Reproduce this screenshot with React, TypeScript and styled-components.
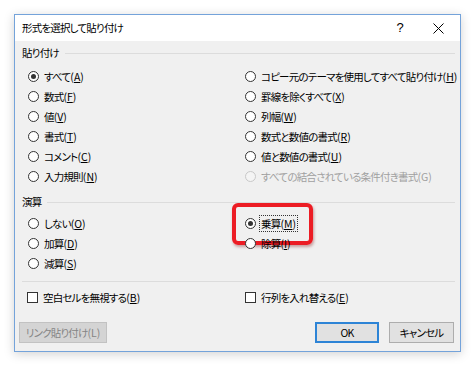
import React from "react";
import styled, { createGlobalStyle } from "styled-components";

const Global = createGlobalStyle`
  html, body { margin: 0; padding: 0; background: #ffffff; }
  body {
    font-family: "Noto Sans CJK JP", "Noto Sans", sans-serif;
    font-size: 10.5px;
    letter-spacing: -0.8px;
    color: #000;
    font-feature-settings: "palt";
  }
`;

const Page = styled.div`
  width: 474px;
  height: 366px;
  padding: 14px 0 0 14px;
  box-sizing: border-box;
`;

const Dialog = styled.div`
  width: 447px;
  height: 338px;
  box-sizing: border-box;
  border: 1px solid #74a3da;
  background: #f0f0f0;
  box-shadow: 0 2px 10px rgba(0, 0, 0, 0.18);
  display: flex;
  flex-direction: column;
`;

const TitleBar = styled.div`
  height: 26px;
  background: #ffffff;
  display: flex;
  align-items: center;
  padding-left: 7px;
  line-height: 26px;
`;

const TitleText = styled.div`
  flex: 1;
`;

const TitleButton = styled.div<{ $w: number }>`
  width: ${(p) => p.$w}px;
  height: 26px;
  display: flex;
  align-items: center;
  justify-content: center;
  font-family: "Liberation Sans", sans-serif;
  font-size: 13px;
  letter-spacing: 0;
`;

const Body = styled.div`
  flex: 1;
  padding: 4px 5px 0 7px;
  display: flex;
  flex-direction: column;
`;

const GroupHeader = styled.div<{ $mt: number }>`
  height: 16px;
  margin-top: ${(p) => p.$mt}px;
  display: flex;
  align-items: center;
  gap: 6px;
  line-height: 16px;
  &::after {
    content: "";
    flex: 1;
    height: 1px;
    background: #dcdcdc;
  }
`;

const OptionGrid = styled.div<{ $mt: number; $rows: number }>`
  margin-top: ${(p) => p.$mt}px;
  padding-left: 6px;
  display: grid;
  grid-template-columns: 217px 1fr;
  grid-auto-flow: column;
  grid-template-rows: repeat(${(p) => p.$rows}, 20px);
  position: relative;
`;

const Option = styled.div<{ $disabled?: boolean }>`
  height: 20px;
  display: flex;
  align-items: center;
  gap: 5px;
  white-space: nowrap;
  color: ${(p) => (p.$disabled ? "#a0a0a0" : "#000")};
  position: relative;
`;

const Radio = styled.span<{ $checked?: boolean; $disabled?: boolean }>`
  width: 11px;
  height: 11px;
  box-sizing: border-box;
  border-radius: 50%;
  border: 1px solid ${(p) => (p.$disabled ? "#c8c8c8" : "#333333")};
  background: ${(p) => (p.$disabled ? "#f4f4f4" : "#ffffff")};
  display: flex;
  align-items: center;
  justify-content: center;
  flex: none;
  &::after {
    content: "";
    display: ${(p) => (p.$checked ? "block" : "none")};
    width: 5px;
    height: 5px;
    border-radius: 50%;
    background: #333333;
  }
`;

const Check = styled.span`
  width: 11px;
  height: 11px;
  box-sizing: border-box;
  border: 1px solid #333333;
  background: #ffffff;
  flex: none;
`;

const Focus = styled.span`
  outline: 1px dotted #333;
  outline-offset: 0px;
  padding: 0 1px;
  margin-left: -1px;
`;

const AccessKey = styled.span`
  letter-spacing: 0;
`;

const Highlight = styled.div`
  position: absolute;
  left: -13px;
  top: -10px;
  width: 81px;
  height: 42px;
  box-sizing: border-box;
  border: 4px solid #ec1c24;
  border-radius: 6px;
  box-shadow: 1px 2px 3px rgba(120, 0, 0, 0.35);
  pointer-events: none;
`;

const Separator = styled.div`
  margin-top: 8px;
  height: 1px;
  background: #dcdcdc;
`;

const CheckRow = styled.div`
  margin-top: 5px;
  padding-left: 5px;
  display: grid;
  grid-template-columns: 218px 1fr;
`;

const ButtonRow = styled.div`
  margin-top: 15px;
  padding: 0 1px 0 0;
  margin-left: -3px;
  display: flex;
  align-items: center;
`;

const Button = styled.div<{ $w: number; $kind?: "default" | "disabled" }>`
  width: ${(p) => p.$w}px;
  height: 21px;
  box-sizing: border-box;
  display: flex;
  align-items: center;
  justify-content: center;
  background: ${(p) => (p.$kind === "disabled" ? "#d4d4d4" : "#e1e1e1")};
  border: ${(p) =>
    p.$kind === "default" ? "2px solid #2d84d6" : p.$kind === "disabled" ? "1px solid #c2c2c2" : "1px solid #adadad"};
  color: ${(p) => (p.$kind === "disabled" ? "#858585" : "#000")};
  white-space: nowrap;
`;

const Spacer = styled.div`
  flex: 1;
`;

const Gap = styled.div<{ $w: number }>`
  width: ${(p) => p.$w}px;
`;

type Opt = { text: string; key: string; checked?: boolean; disabled?: boolean; focus?: boolean; highlight?: boolean };

const Key = ({ k, underline = true }: { k: string; underline?: boolean }) => (
  <AccessKey>({underline ? <u>{k}</u> : k})</AccessKey>
);

const Label = ({ o }: { o: Opt }) => {
  const content = (
    <>
      {o.text}
      <Key k={o.key} underline={!o.disabled} />
    </>
  );
  return o.focus ? <Focus>{content}</Focus> : <span>{content}</span>;
};

const pasteOpts: Opt[] = [
  { text: "すべて", key: "A", checked: true },
  { text: "数式", key: "F" },
  { text: "値", key: "V" },
  { text: "書式", key: "T" },
  { text: "コメント", key: "C" },
  { text: "入力規則", key: "N" },
  { text: "コピー元のテーマを使用してすべて貼り付け", key: "H" },
  { text: "罫線を除くすべて", key: "X" },
  { text: "列幅", key: "W" },
  { text: "数式と数値の書式", key: "R" },
  { text: "値と数値の書式", key: "U" },
  { text: "すべての結合されている条件付き書式", key: "G", disabled: true },
];

const opOpts: Opt[] = [
  { text: "しない", key: "O" },
  { text: "加算", key: "D" },
  { text: "減算", key: "S" },
  { text: "乗算", key: "M", checked: true, focus: true, highlight: true },
  { text: "除算", key: "I" },
];

const CloseIcon = () => (
  <svg width="11" height="11" viewBox="0 0 11 11">
    <path d="M0.5 0.5 L10.5 10.5 M10.5 0.5 L0.5 10.5" stroke="#000" strokeWidth="1" fill="none" />
  </svg>
);

export default function App() {
  const renderOpt = (o: Opt, i: number) => (
    <Option key={i} $disabled={o.disabled}>
      <Radio $checked={o.checked} $disabled={o.disabled} />
      <Label o={o} />
      {o.highlight && <Highlight />}
    </Option>
  );
  return (
    <>
      <Global />
      <Page>
        <Dialog>
          <TitleBar>
            <TitleText>形式を選択して貼り付け</TitleText>
            <TitleButton $w={22}>?</TitleButton>
            <Gap $w={16} />
            <TitleButton $w={22}>
              <CloseIcon />
            </TitleButton>
            <Gap $w={11} />
          </TitleBar>
          <Body>
            <GroupHeader $mt={0}>貼り付け</GroupHeader>
            <OptionGrid $mt={5} $rows={6}>
              {pasteOpts.map(renderOpt)}
            </OptionGrid>
            <GroupHeader $mt={8}>演算</GroupHeader>
            <OptionGrid $mt={3} $rows={3}>
              {opOpts.map(renderOpt)}
            </OptionGrid>
            <Separator />
            <CheckRow>
              <Option>
                <Check />
                <span>
                  空白セルを無視する
                  <Key k="B" />
                </span>
              </Option>
              <Option>
                <Check />
                <span>
                  行列を入れ替える
                  <Key k="E" />
                </span>
              </Option>
            </CheckRow>
            <ButtonRow>
              <Button $w={88} $kind="disabled">
                リンク貼り付け<Key k="L" underline={false} />
              </Button>
              <Spacer />
              <Button $w={64} $kind="default">
                OK
              </Button>
              <Gap $w={10} />
              <Button $w={65}>キャンセル</Button>
            </ButtonRow>
          </Body>
        </Dialog>
      </Page>
    </>
  );
}
